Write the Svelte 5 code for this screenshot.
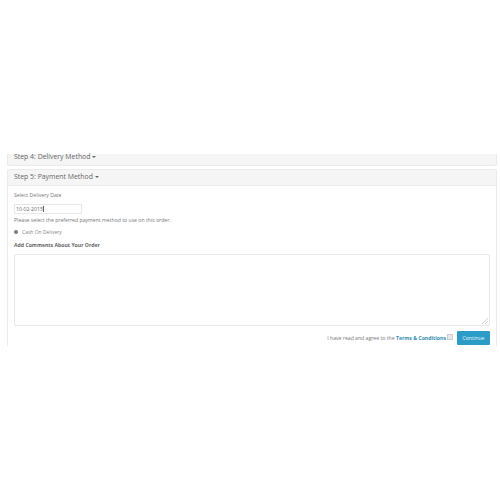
<script>
    let date = '10-02-2015';
</script>

<div class="page">
    <section class="panel first">
        <header class="heading">Step 4: Delivery Method <span class="caret"></span></header>
    </section>
    <section class="panel second">
        <header class="heading">Step 5: Payment Method <span class="caret"></span></header>
        <div class="body">
            <div class="label">Select Delivery Date</div>
            <div class="date"><span>{date}</span><i class="cursor"></i></div>
            <p class="hint">Please select the preferred payment method to use on this order.</p>
            <div class="radio"><span class="dot"></span>Cash On Delivery</div>
            <div class="comments">Add Comments About Your Order</div>
            <div class="area">
                <svg class="grip" width="6" height="6" viewBox="0 0 6 6">
                    <path d="M0 6L6 0M3 6L6 3" stroke="#bbb" stroke-width="0.7" fill="none" />
                </svg>
            </div>
            <div class="agree">
                <span>I have read and agree to the <a href="#terms">Terms &amp; Conditions</a></span>
                <span class="check"></span>
                <button class="continue">Continue</button>
            </div>
        </div>
    </section>
</div>

<style>
    :global(body) {
        margin: 0;
        background: #fff;
    }

    .page {
        width: 500px;
        height: 500px;
        box-sizing: border-box;
        padding: 154px 3px 0 7px;
        font-family: "Open Sans", sans-serif;
        color: #777;
        overflow: hidden;
    }

    .panel {
        border: 1px solid #ebebeb;
        box-sizing: border-box;
    }

    .first {
        border-top: 0;
        border-radius: 0 0 2px 2px;
    }

    .first .heading {
        height: 10px;
        border-bottom: 0;
        padding-bottom: 1px;
        line-height: 6px;
    }

    .second {
        margin-top: 3px;
        border-bottom: 0;
        height: 177px;
        border-radius: 2px 2px 0 0;
    }

    .heading {
        height: 15px;
        box-sizing: content-box;
        padding-left: 6px;
        background: #f5f5f5;
        border-bottom: 1px solid #ececec;
        font-size: 6.9px;
        line-height: 14px;
        color: #666;
    }

    .caret {
        display: inline-block;
        vertical-align: middle;
        border: 2px solid transparent;
        border-top-color: #666;
        border-bottom: 0;
    }

    .body {
        padding: 5px 6px 0;
        font-size: 5.15px;
    }

    .label {
        line-height: 8px;
    }

    .date {
        margin-top: 5px;
        width: 68px;
        height: 10px;
        box-sizing: border-box;
        border: 1px solid #e8e8e8;
        padding-left: 1px;
        line-height: 9px;
        color: #666;
        display: flex;
        align-items: center;
    }

    .cursor {
        width: 0.5px;
        height: 6px;
        background: #666;
    }

    .hint {
        margin: 2px 0 0;
        line-height: 8px;
    }

    .radio {
        margin-top: 4px;
        display: flex;
        align-items: center;
        gap: 4px;
        line-height: 8px;
        font-size: 5px;
        color: #888;
    }

    .dot {
        width: 4px;
        height: 4px;
        border-radius: 50%;
        background: #778;
    }

    .comments {
        margin-top: 5px;
        font-weight: 700;
        line-height: 8px;
        color: #666;
    }

    .area {
        margin-top: 5px;
        height: 72px;
        box-sizing: border-box;
        border: 1px solid #e6e6e6;
        border-radius: 2px;
        display: flex;
        align-items: flex-end;
        justify-content: flex-end;
    }

    .grip {
        margin: 0 1px 1px 0;
    }

    .agree {
        margin-top: 5px;
        display: flex;
        align-items: center;
        justify-content: flex-end;
        color: #777;
    }

    .agree a {
        color: #2f8fb3;
        font-weight: 700;
        text-decoration: none;
    }

    .check {
        width: 6px;
        height: 6px;
        box-sizing: border-box;
        margin: 0 4px 2px 1px;
        border: 1px solid #ccc;
        background: #e8e8e8;
    }

    .continue {
        width: 33px;
        height: 14px;
        padding: 0;
        border: 0;
        border-radius: 1px;
        background: #2a9cc7;
        color: #e8f6fb;
        font: 5.2px "Open Sans", sans-serif;
    }
</style>
